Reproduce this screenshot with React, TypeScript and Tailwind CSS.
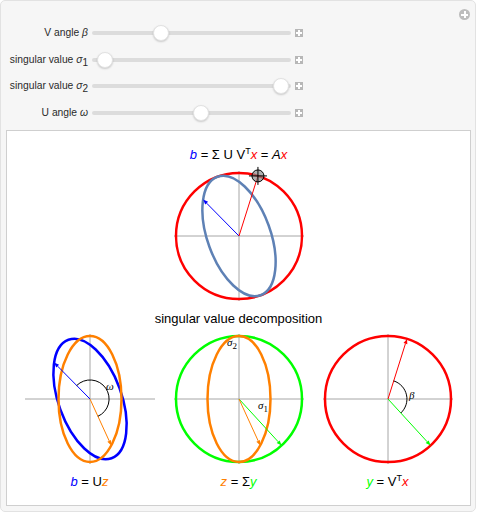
import React from "react";

const R = 63;
const C = 70;

const deg = (a: number) => (a * Math.PI) / 180;
const pt = (angle: number, len: number) => ({
  x: C + Math.cos(deg(angle)) * len,
  y: C - Math.sin(deg(angle)) * len,
});

// vectors (angles in degrees, lengths in px)
const xVec = pt(72.5, R);
const yVec = pt(-47.5, R);
const zVec = pt(-65.4, 0.811 * R);
const bVec = pt(134.6, 0.811 * R);

const sliders = [
  { label: "V angle", sym: "β", sub: "", pos: 69 },
  { label: "singular value", sym: "σ", sub: "1", pos: 13 },
  { label: "singular value", sym: "σ", sub: "2", pos: 189 },
  { label: "U angle", sym: "ω", sub: "", pos: 109 },
];

function Arrow({ to, color }: { to: { x: number; y: number }; color: string }) {
  const dx = to.x - C;
  const dy = to.y - C;
  const len = Math.hypot(dx, dy);
  const ux = dx / len;
  const uy = dy / len;
  const bx = to.x - ux * 5;
  const by = to.y - uy * 5;
  const head = `${to.x},${to.y} ${bx - uy * 2},${by + ux * 2} ${bx + uy * 2},${by - ux * 2}`;
  return (
    <g>
      <line x1={C} y1={C} x2={bx} y2={by} stroke={color} strokeWidth="1" />
      <polygon points={head} fill={color} />
    </g>
  );
}

function Axes() {
  return (
    <g stroke="#a6a6a6" strokeWidth="1">
      <line x1="5" y1={C} x2="135" y2={C} />
      <line x1={C} y1="5" x2={C} y2="135" />
    </g>
  );
}

function Plot({ children }: { children: React.ReactNode }) {
  return (
    <svg width="140" height="140" viewBox="0 0 140 140" className="block">
      <Axes />
      {children}
    </svg>
  );
}

const I = ({ c, children }: { c: string; children: React.ReactNode }) => (
  <i style={{ color: c }}>{children}</i>
);

const SupT = () => <span className="text-[9px] leading-none relative -top-[5px]">T</span>;

export default function App() {
  return (
    <div
      className="relative w-[476px] h-[512px] bg-[#f6f6f6] border border-[#e2e2e2] rounded-[5px] px-[5px] text-[#2a2a2a]"
      style={{ fontFamily: '"Liberation Sans", Arial, sans-serif' }}
    >
      {/* corner plus */}
      <div className="absolute right-[5px] top-[8px] w-[11px] h-[11px] rounded-full bg-[#bdbdbd] flex items-center justify-center">
        <div className="relative w-[7px] h-[7px]">
          <div className="absolute left-0 top-[2.5px] w-[7px] h-[2px] bg-white" />
          <div className="absolute top-0 left-[2.5px] w-[2px] h-[7px] bg-white" />
        </div>
      </div>

      {/* sliders */}
      <div className="pt-[19px]">
        {sliders.map((s, i) => (
          <div key={i} className="flex items-center h-[26.5px]">
            <div className="w-[82px] text-right text-[10.3px] leading-none whitespace-nowrap">
              {s.label} <i className="italic">{s.sym}</i>
              {s.sub && <span className="text-[10px] relative top-[3px]">{s.sub}</span>}
            </div>
            <div className="relative ml-[4px] w-[199px] h-[4px] rounded-full bg-[#dcdcdc]">
              <div
                className="absolute top-[-6px] w-[16px] h-[16px] -ml-[8px] rounded-full bg-white border border-[#e2e2e2] shadow-[0_1px_2px_rgba(0,0,0,0.18)]"
                style={{ left: s.pos }}
              />
            </div>
            <div className="ml-[4px] w-[8px] h-[8px] bg-[#b7b7b7] relative">
              <div className="absolute left-[1px] top-[3px] w-[6px] h-[2px] bg-white" />
              <div className="absolute left-[3px] top-[1px] w-[2px] h-[6px] bg-white" />
            </div>
          </div>
        ))}
      </div>

      {/* figure */}
      <div className="mt-[4px] w-[465px] h-[376px] bg-white border border-[#cfcfcf] flex flex-col items-center text-[13px] text-black">
        <div className="mt-[16px] leading-4">
          <I c="#0000ff">b</I> = Σ U V<SupT />
          <I c="#ff0000">x</I> = <i>A</i>
          <I c="#ff0000">x</I>
        </div>

        <div className="mt-[3px]">
          <Plot>
            <circle cx={C} cy={C} r={R} fill="none" stroke="#ff0000" strokeWidth="2.5" />
            <ellipse
              cx={C}
              cy={C}
              rx={R * 0.5}
              ry={R}
              fill="none"
              stroke="#5e81b5"
              strokeWidth="2.5"
              transform={`rotate(-20 ${C} ${C})`}
            />
            <Arrow to={bVec} color="#0000ff" />
            <line x1={C} y1={C} x2={xVec.x} y2={xVec.y} stroke="#ff0000" strokeWidth="1" />
            <circle cx={xVec.x} cy={xVec.y} r="6" fill="#8c8c8c" fillOpacity="0.7" stroke="#000" strokeWidth="1" />
            <g stroke="#000" strokeWidth="1">
              <line x1={xVec.x - 9} y1={xVec.y} x2={xVec.x + 9} y2={xVec.y} />
              <line x1={xVec.x} y1={xVec.y - 9} x2={xVec.x} y2={xVec.y + 9} />
            </g>
          </Plot>
        </div>

        <div className="mt-[5px] leading-4">singular value decomposition</div>

        <div className="mt-[2px] flex gap-[9px]">
          <div className="flex flex-col items-center w-[140px]">
            <Plot>
              <ellipse
                cx={C}
                cy={C}
                rx={R * 0.5}
                ry={R}
                fill="none"
                stroke="#0000ff"
                strokeWidth="2.5"
                transform={`rotate(-20 ${C} ${C})`}
              />
              <ellipse cx={C} cy={C} rx={R * 0.5} ry={R} fill="none" stroke="#ff8000" strokeWidth="2.5" />
              <Arrow to={bVec} color="#0000ff" />
              <Arrow to={zVec} color="#ff8000" />
              <path d="M77.9 87.3 A19 19 0 1 0 56.7 56.5" fill="none" stroke="#000" strokeWidth="1" />
              <text x="86" y="61" fontSize="11" fontStyle="italic" fill="#000" fontFamily="Liberation Serif, serif">
                ω
              </text>
            </Plot>
            <div className="mt-[5px] leading-4">
              <I c="#0000ff">b</I> = U<I c="#ff8000">z</I>
            </div>
          </div>

          <div className="flex flex-col items-center w-[140px]">
            <Plot>
              <circle cx={C} cy={C} r={R} fill="none" stroke="#00ff00" strokeWidth="2.5" />
              <ellipse cx={C} cy={C} rx={R * 0.5} ry={R} fill="none" stroke="#ff8000" strokeWidth="2.5" />
              <Arrow to={yVec} color="#00ff00" />
              <Arrow to={zVec} color="#ff8000" />
              <text x="58" y="17" fontSize="11" fontStyle="italic" fill="#000" fontFamily="Liberation Serif, serif">
                σ<tspan fontSize="9" fontStyle="normal" dy="3">2</tspan>
              </text>
              <text x="89" y="80" fontSize="11" fontStyle="italic" fill="#000" fontFamily="Liberation Serif, serif">
                σ<tspan fontSize="9" fontStyle="normal" dy="3">1</tspan>
              </text>
            </Plot>
            <div className="mt-[5px] leading-4">
              <I c="#ff8000">z</I> = Σ<I c="#00ff00">y</I>
            </div>
          </div>

          <div className="flex flex-col items-center w-[140px]">
            <Plot>
              <circle cx={C} cy={C} r={R} fill="none" stroke="#ff0000" strokeWidth="2.5" />
              <Arrow to={xVec} color="#ff0000" />
              <Arrow to={yVec} color="#00ff00" />
              <path d="M82.8 84 A19 19 0 0 0 75.7 51.9" fill="none" stroke="#000" strokeWidth="1" />
              <text x="91" y="70" fontSize="11" fontStyle="italic" fill="#000" fontFamily="Liberation Serif, serif">
                β
              </text>
            </Plot>
            <div className="mt-[5px] leading-4">
              <I c="#00ff00">y</I> = V<SupT />
              <I c="#ff0000">x</I>
            </div>
          </div>
        </div>
      </div>
    </div>
  );
}
